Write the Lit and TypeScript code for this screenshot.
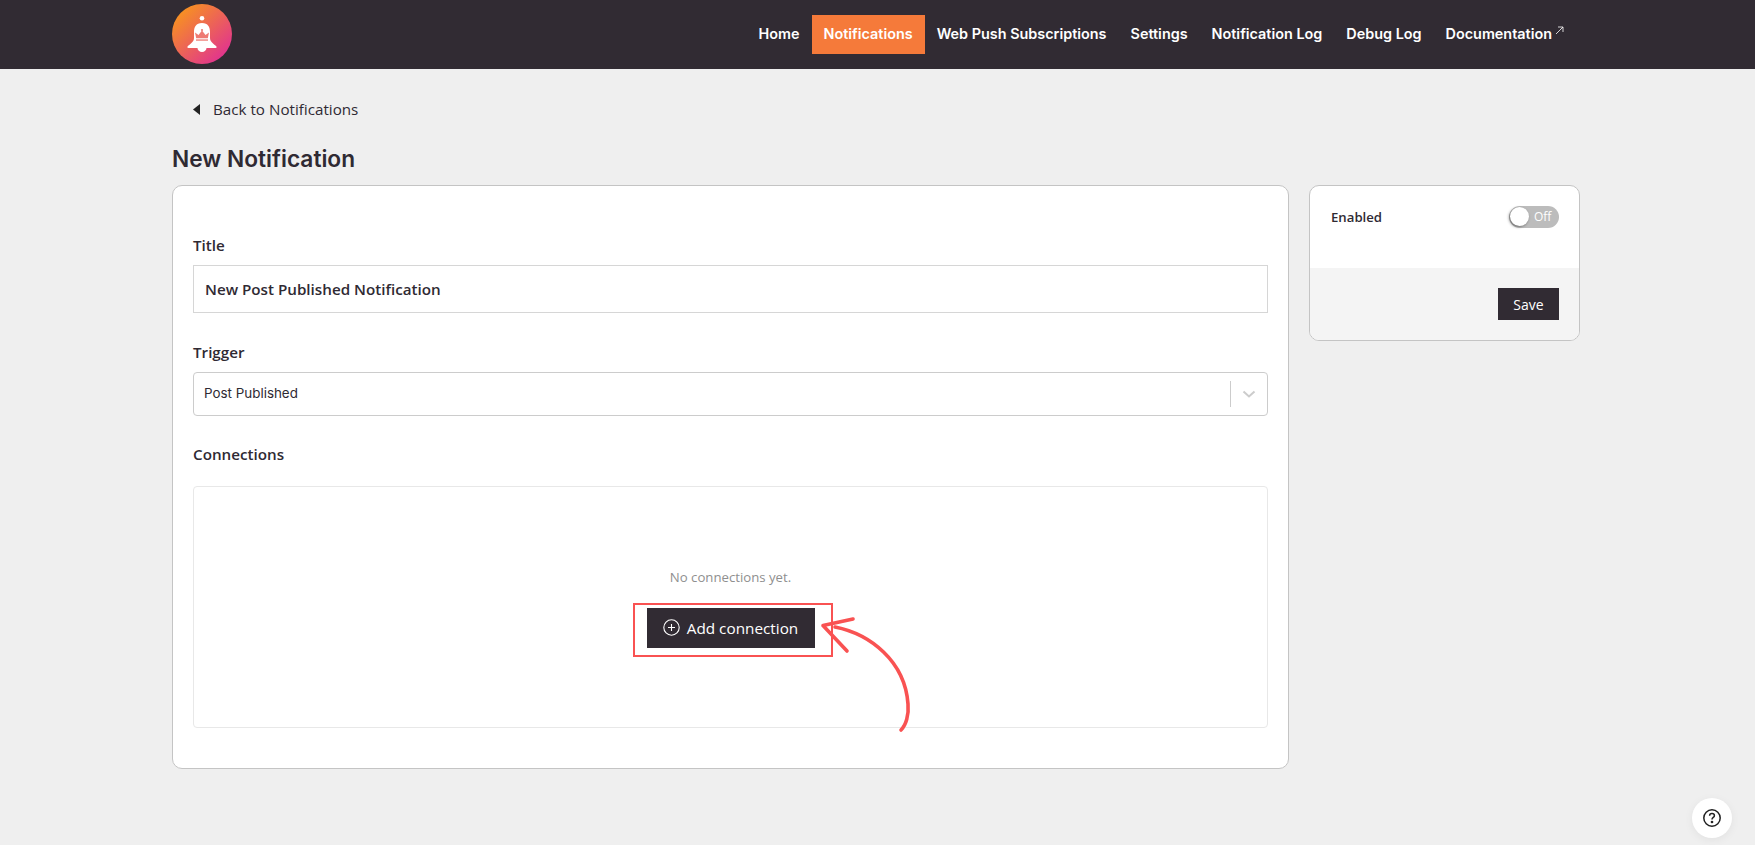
import { LitElement, html, css } from 'lit';
import { customElement } from 'lit/decorators.js';

const NAV = ['Home', 'Notifications', 'Web Push Subscriptions', 'Settings', 'Notification Log', 'Debug Log', 'Documentation'];

@customElement('app-root')
export class AppRoot extends LitElement {
  static styles = css`
    :host {
      display: block;
      min-height: 845px;
      background: #efefef;
      font-family: 'Open Sans', 'Liberation Sans', sans-serif;
      color: #2f2a33;
      position: relative;
    }

    .header {
      height: 69px;
      background: #312b33;
      display: flex;
      align-items: center;
      justify-content: space-between;
      padding: 0 179px 0 172px;
    }

    .logo { display: block; width: 60px; height: 60px; margin-bottom: 1px; }

    .nav { display: flex; align-items: center; }

    .nav a {
      height: 39px;
      box-sizing: border-box;
      display: flex;
      align-items: center;
      padding: 0 12px 2px;
      color: #fff;
      font-family: Inter, 'Open Sans', sans-serif;
      font-size: 14.4px;
      font-weight: 600;
      white-space: nowrap;
    }

    .nav a.active { background: #f57a3a; }

    .nav svg { margin: -6px 0 0 3px; }

    .main { padding: 30px 0 0 172px; width: 1408px; }

    .back {
      display: flex;
      align-items: center;
      height: 20px;
      padding-left: 21px;
      font-size: 15.2px;
    }

    .back svg { margin-right: 13px; }

    h1 {
      margin: 25px 0 11px;
      font-family: Inter, 'Open Sans', sans-serif;
      font-size: 22.7px;
      line-height: 30px;
      font-weight: 600;
    }

    .columns { display: flex; gap: 20px; align-items: flex-start; }

    .card {
      background: #fff;
      border: 1px solid #c4c4c4;
      border-radius: 10px;
      box-sizing: border-box;
    }

    .form { width: 1117px; height: 584px; padding: 49px 20px 41px; }

    label {
      display: block;
      font-size: 15.2px;
      line-height: 20px;
      font-weight: 550;
      margin-bottom: 10px;
    }

    .input {
      height: 48px;
      box-sizing: border-box;
      border: 1px solid #d6d6d6;
      display: flex;
      align-items: center;
      padding: 0 11px;
      font-size: 15.2px;
      font-weight: 550;
      margin-bottom: 29px;
    }

    .select {
      height: 44px;
      box-sizing: border-box;
      border: 1px solid #cccccc;
      border-radius: 4px;
      display: flex;
      align-items: center;
      justify-content: space-between;
      padding: 0 0 0 10px;
      font-family: Inter, 'Open Sans', sans-serif;
      font-size: 13.4px;
      margin-bottom: 28px;
    }

    .select-text { margin-top: -2px; }

    .select-end {
      height: 26px;
      width: 36px;
      border-left: 1px solid #cccccc;
      display: flex;
      align-items: center;
      justify-content: center;
    }

    label.connections-label { margin-bottom: 22px; }

    .connections {
      height: 242px;
      box-sizing: border-box;
      border: 1px solid #e8e8e8;
      border-radius: 4px;
      display: flex;
      flex-direction: column;
      align-items: center;
      justify-content: center;
    }

    .empty {
      font-size: 13.2px;
      line-height: 20px;
      color: #8f8f8f;
      margin-bottom: 21px;
    }

    .add-wrap { position: relative; }

    .add {
      width: 168px;
      height: 40px;
      box-sizing: border-box;
      background: #312b33;
      color: #fff;
      display: flex;
      align-items: center;
      justify-content: center;
      gap: 7px;
      font-size: 15.3px;
    }

    .highlight {
      position: absolute;
      left: -14px;
      top: -5px;
      width: 200px;
      height: 54px;
      box-sizing: border-box;
      border: 2px solid #f95252;
    }

    .arrow { position: absolute; left: 173px; top: 10px; overflow: visible; }

    .side { width: 271px; height: 156px; overflow: hidden; }

    .side-top {
      height: 82px;
      box-sizing: border-box;
      padding: 20px 20px 0 21px;
      display: flex;
      justify-content: space-between;
      align-items: flex-start;
      font-size: 13.2px;
      font-weight: 550;
      line-height: 23px;
    }

    .toggle {
      width: 50px;
      height: 22px;
      border-radius: 11px;
      background: #bcbcbc;
      position: relative;
      color: #fff;
      font-size: 12px;
      font-weight: 400;
      line-height: 22px;
      padding-left: 25px;
      box-sizing: border-box;
    }

    .knob {
      position: absolute;
      left: 1px;
      top: 1px;
      width: 19px;
      height: 19px;
      border-radius: 50%;
      background: #fff;
      box-shadow: -1px 1px 3px rgba(0, 0, 0, 0.45);
    }

    .side-bottom {
      height: 72px;
      background: #f4f4f4;
      display: flex;
      justify-content: flex-end;
      padding: 20px 20px 0 0;
      box-sizing: border-box;
    }

    .save {
      width: 61px;
      height: 32px;
      background: #312b33;
      color: #fff;
      font-size: 14px;
      display: flex;
      align-items: center;
      justify-content: center;
    }

    .help {
      position: absolute;
      right: 23px;
      top: 798px;
      width: 40px;
      height: 40px;
      border-radius: 50%;
      background: #fff;
      box-shadow: 0 2px 10px rgba(0, 0, 0, 0.06);
      display: flex;
      align-items: center;
      justify-content: center;
    }
  `;

  renderLogo() {
    return html`<svg class="logo" viewBox="0 0 60 60">
      <defs>
        <linearGradient id="lg" x1="0.1" y1="0.1" x2="0.85" y2="0.9">
          <stop offset="0" stop-color="#f8951d"></stop>
          <stop offset="1" stop-color="#e1338f"></stop>
        </linearGradient>
      </defs>
      <circle cx="30" cy="30" r="30" fill="url(#lg)"></circle>
      <circle cx="30" cy="14.3" r="2.3" fill="#fff"></circle>
      <path fill="#fff" d="M30 19C24 19 22 23 22 28L22 34C22 38 18 40 15.5 42.5Q15 44 16.5 44L43.5 44Q45 44 44.5 42.5C42 40 38 38 38 34L38 28C38 23 36 19 30 19Z"></path>
      <path fill="#fff" d="M25.5 44A4.5 4 0 0 0 34.5 44Z"></path>
      <path fill="#ee7a72" d="M23 28.5L26.5 31L30 26.5L33.5 31L37 28.5L35.8 34.3L24.2 34.3Z"></path>
      <circle cx="30" cy="26" r="1.1" fill="#ee7a72"></circle>
      <rect x="24" y="35.4" width="12" height="1.3" fill="#ee7a72"></rect>
    </svg>`;
  }

  render() {
    return html`
      <div class="header">
        ${this.renderLogo()}
        <nav class="nav">
          ${NAV.map(
            n => html`<a class=${n === 'Notifications' ? 'active' : ''}>
              ${n}
              ${n === 'Documentation'
                ? html`<svg width="9" height="9" viewBox="0 0 9 9" fill="none" stroke="#fff" stroke-width="0.8"><path d="M1 8L8 1M3 1H8V6"></path></svg>`
                : ''}
            </a>`
          )}
        </nav>
      </div>

      <div class="main">
        <div class="back">
          <svg width="7" height="11" viewBox="0 0 7 11"><path d="M7 0V11L0 5.5Z" fill="#222"></path></svg>
          Back to Notifications
        </div>
        <h1>New Notification</h1>

        <div class="columns">
          <div class="card form">
            <label>Title</label>
            <div class="input">New Post Published Notification</div>

            <label>Trigger</label>
            <div class="select">
              <span class="select-text">Post Published</span>
              <div class="select-end">
                <svg width="14" height="8" viewBox="0 0 14 8" fill="none" stroke="#cccccc" stroke-width="2"><path d="M1.5 1.5L7 6.5L12.5 1.5"></path></svg>
              </div>
            </div>

            <label class="connections-label">Connections</label>
            <div class="connections">
              <div class="empty">No connections yet.</div>
              <div class="add-wrap">
                <div class="add">
                  <svg width="17" height="17" viewBox="0 0 17 17" fill="none" stroke="#fff" stroke-width="1.1"><circle cx="8.5" cy="8.5" r="7.7"></circle><path d="M8.5 5V12M5 8.5H12"></path></svg>
                  Add connection
                </div>
                <div class="highlight"></div>
                <svg class="arrow" width="95" height="116" viewBox="0 0 95 116" fill="none" stroke="#f95252" stroke-width="3.6" stroke-linecap="round" stroke-linejoin="round">
                  <path d="M33 1L3 7.5L27 33"></path>
                  <path d="M15 9C50 16 85 43 88 86C89 97 86 107 81 112"></path>
                </svg>
              </div>
            </div>
          </div>

          <div class="card side">
            <div class="side-top">
              Enabled
              <div class="toggle"><span class="knob"></span>Off</div>
            </div>
            <div class="side-bottom"><div class="save">Save</div></div>
          </div>
        </div>
      </div>

      <div class="help">
        <svg width="20" height="20" viewBox="0 0 20 20" fill="none" stroke="#222" stroke-width="1.5">
          <circle cx="10" cy="10" r="8.2"></circle>
          <path d="M7.6 7.8C7.6 6.4 8.7 5.6 10 5.6C11.4 5.6 12.4 6.5 12.4 7.7C12.4 9.4 10 9.5 10 11.4"></path>
          <circle cx="10" cy="14" r="0.6" fill="#222"></circle>
        </svg>
      </div>
    `;
  }
}
